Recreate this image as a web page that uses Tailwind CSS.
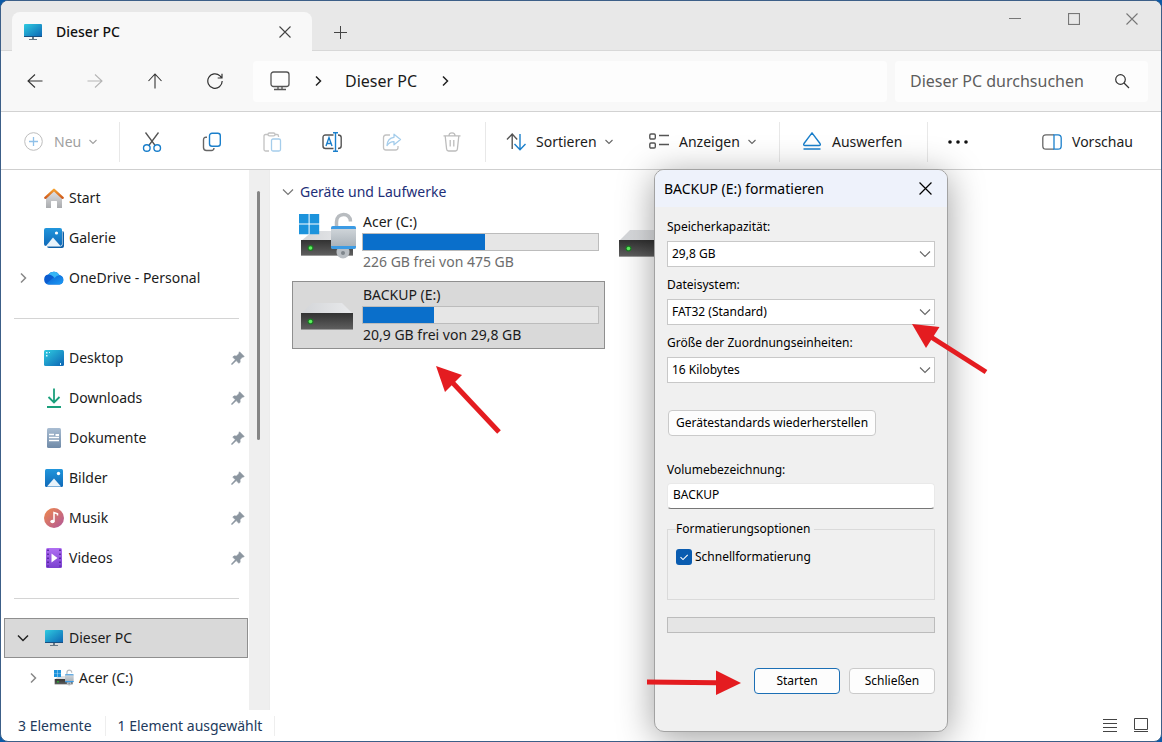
<!DOCTYPE html>
<html lang="de">
<head>
<meta charset="utf-8">
<meta name="viewport" content="width=device-width, initial-scale=1">
<title>Dieser PC</title>
<script src="https://cdn.jsdelivr.net/npm/@tailwindcss/browser@4"></script>
</head>
<body class="h-screen overflow-hidden bg-[#0a5aa8] font-['Noto_Sans','Open_Sans',sans-serif] text-sm text-[#1b1b1b]">
<svg class="absolute size-0" aria-hidden="true">
  <defs>
    <linearGradient id="gScreen" x1="0" y1="0" x2="1" y2="1"><stop offset="0" stop-color="#2fcbe0"/><stop offset="1" stop-color="#0c64b4"/></linearGradient>
    <linearGradient id="gPic" x1="0" y1="0" x2="0" y2="1"><stop offset="0" stop-color="#2196dc"/><stop offset="1" stop-color="#0f69b8"/></linearGradient>
    <linearGradient id="gRoof" x1="0" y1="0" x2="0" y2="1"><stop offset="0" stop-color="#f5a030"/><stop offset="1" stop-color="#cf5a1c"/></linearGradient>
    <linearGradient id="gWall" x1="0" y1="0" x2="0" y2="1"><stop offset="0" stop-color="#e2e2e4"/><stop offset="1" stop-color="#a9abae"/></linearGradient>
    <linearGradient id="gCloud" x1="0" y1="0" x2="1" y2="1"><stop offset="0" stop-color="#0a5cd0"/><stop offset="1" stop-color="#1c9cf5"/></linearGradient>
    <linearGradient id="gMusic" x1="0" y1="0" x2="1" y2="1"><stop offset="0" stop-color="#f08a4b"/><stop offset="1" stop-color="#b0569a"/></linearGradient>
    <linearGradient id="gVideo" x1="0" y1="0" x2="0" y2="1"><stop offset="0" stop-color="#b06ff2"/><stop offset="1" stop-color="#7a40d0"/></linearGradient>
    <linearGradient id="gDoc" x1="0" y1="0" x2="0" y2="1"><stop offset="0" stop-color="#a9bdd2"/><stop offset="1" stop-color="#6f8aa8"/></linearGradient>
    <linearGradient id="gTop" x1="0" y1="0" x2="1" y2="0"><stop offset="0" stop-color="#d3d5d8"/><stop offset="1" stop-color="#e9eaec"/></linearGradient>
    <linearGradient id="gFront" x1="0" y1="0" x2="0" y2="1"><stop offset="0" stop-color="#323232"/><stop offset="1" stop-color="#5e5e5e"/></linearGradient>
    <linearGradient id="gLock" x1="0" y1="0" x2="0" y2="1"><stop offset="0" stop-color="#d5dade"/><stop offset="1" stop-color="#a4adb5"/></linearGradient>
    <symbol id="pc" viewBox="0 0 20 18"><rect x="1" y="1" width="18" height="13" rx="1" fill="url(#gScreen)"/><path d="M1 13.500h18" stroke="#1a4f80" stroke-width="1"/><path d="M9 14h2v2h3v1H6v-1h3z" fill="#667785"/></symbol>
    <symbol id="pin" viewBox="0 0 14 14"><path d="M8.500.8 13.200 5.500l-1.400.7-.5-.1-2.300 2.600.1 2.400-1.200 1.200L5.200 9.600 1.400 13.200.6 13.400l.2-.8L4.400 8.800 1.800 6.100 3 4.900l2.400.1L8 2.700l-.1-.6z" fill="#8c96a0" stroke="#8c96a0" stroke-width=".7" stroke-linejoin="round"/></symbol>
    <symbol id="down" viewBox="0 0 12 12"><path d="m2.500 4 3.500 3.500L9.500 4" fill="none" stroke="currentColor" stroke-width="1.100"/></symbol>
    <symbol id="right" viewBox="0 0 12 12"><path d="m4 1.500 4.500 4.500L4 10.500" fill="none" stroke="currentColor" stroke-width="1.500"/></symbol>
    <symbol id="cross" viewBox="0 0 12 12"><path d="m.5.5 11 11m0-11-11 11" fill="none" stroke="currentColor" stroke-width="1.100"/></symbol>
    <symbol id="drive" viewBox="0 0 54 30"><path d="M12 2h30l11 11H1z" fill="url(#gTop)"/><rect x="1" y="12" width="52" height="16" fill="url(#gFront)"/><path d="M1 28.500h52" stroke="#999"/><circle cx="10.500" cy="20.500" r="3" fill="#1c7a24"/><circle cx="10.500" cy="20.500" r="1.800" fill="#5df25f"/></symbol>
    <symbol id="winlock" viewBox="0 0 58 50">
      <path d="M14 19h30l10 10H2z" fill="url(#gTop)"/><rect x="2" y="28" width="52" height="15" fill="url(#gFront)"/><path d="M2 43.500h52" stroke="#999"/><circle cx="11.500" cy="36" r="3" fill="#1c7a24"/><circle cx="11.500" cy="36" r="1.800" fill="#5df25f"/>
      <path d="M0 2h9.600v9.600H0zM10.600 2h9.600v9.600h-9.600zM0 12.600h9.600v9.600H0zM10.600 12.600h9.600v9.600h-9.600z" fill="#1c93dc"/>
      <path d="M37.500 15V10c0-10 14-10 14-.5" fill="none" stroke="#b8bcc0" stroke-width="3.500"/>
      <circle cx="44" cy="40" r="6.500" fill="#b9bec3"/><circle cx="44" cy="41" r="2" fill="#7f868c"/>
      <rect x="32" y="14" width="25" height="23" rx="2" fill="url(#gLock)"/><path d="M32 16q0-2 2-2h21q2 0 2 2v1H32zM32 34h25v1q0 2-2 2H34q-2 0-2-2z" fill="#3c9be4"/>
    </symbol>
  </defs>
</svg>

<div class="relative flex h-full flex-col overflow-hidden rounded-lg border border-[#3c5f88] bg-white">
  <!-- Tab strip -->
  <header class="flex h-[50px] shrink-0 items-end bg-[#e8e8e8] shadow-[inset_0_-1px_0_#d8d8d8]">
    <div class="ml-[11px] flex h-[39px] w-[300px] items-center rounded-t-lg bg-[#f8f8f8] pl-[11px] pr-[21px]">
      <svg class="h-[18px] w-5"><use href="#pc"/></svg>
      <span class="ml-[13px] flex-1 font-medium text-[#111]">Dieser PC</span>
      <button aria-label="Tab schließen" class="text-[#444]"><svg class="size-3"><use href="#cross"/></svg></button>
    </div>
    <button aria-label="Neuer Tab" class="ml-[22px] mb-[12px] text-[#444]"><svg class="size-[13px]" viewBox="0 0 13 13"><path d="M6.500 0v13M0 6.500h13" stroke="currentColor"/></svg></button>
    <div class="ml-auto flex h-full w-[152px] items-start justify-between pr-[23px] pt-[12px] text-[#777]">
      <button aria-label="Minimieren"><svg class="size-3" viewBox="0 0 12 12"><path d="M0 5.500h12" stroke="currentColor"/></svg></button>
      <button aria-label="Maximieren"><svg class="size-3" viewBox="0 0 12 12"><rect x=".5" y=".5" width="11" height="11" fill="none" stroke="currentColor" stroke-width="1.200"/></svg></button>
      <button aria-label="Schließen"><svg class="size-3"><use href="#cross"/></svg></button>
    </div>
  </header>

  <!-- Navigation -->
  <nav class="flex h-[61px] shrink-0 items-center border-b border-[#d2d2d2] bg-[#f8f8f8] pl-1 pr-[13px]">
    <button aria-label="Zurück" class="flex w-[60px] justify-center"><svg class="size-4" viewBox="0 0 16 16" fill="none" stroke="#333" stroke-width="1.100"><path d="M15.500 8H1M8 1.500 1 8l7 6.500"/></svg></button>
    <button aria-label="Vorwärts" class="flex w-[60px] justify-center"><svg class="size-4" viewBox="0 0 16 16" fill="none" stroke="#b5b5b5" stroke-width="1.100"><path d="M.5 8H15M8 1.500 15 8l-7 6.500"/></svg></button>
    <button aria-label="Nach oben" class="flex w-[60px] justify-center"><svg class="size-4" viewBox="0 0 16 16" fill="none" stroke="#333" stroke-width="1.100"><path d="M8 15.500V1M1.500 8 8 1l6.500 7"/></svg></button>
    <button aria-label="Aktualisieren" class="flex w-[60px] justify-center"><svg class="size-4" viewBox="0 0 16 16" fill="none" stroke="#333" stroke-width="1.200"><path d="M15.200 8A7.200 7.200 0 1 1 13 2.900L15 5M15 .8V5h-4.300"/></svg></button>
    <div class="ml-2 flex h-[41px] flex-1 items-center rounded bg-[#fdfdfd] pl-[17px] text-base">
      <svg class="size-5" viewBox="0 0 20 20" fill="none" stroke="#555" stroke-width="1.300"><rect x="1" y="1" width="18" height="14.500" rx="2.500"/><path d="M8 15.500v3M12 15.500v3M4 18.500h12"/></svg>
      <svg class="ml-[22px] size-3 text-[#222]"><use href="#right"/></svg>
      <a href="#" class="ml-[21px]">Dieser PC</a>
      <svg class="ml-[22px] size-3 text-[#222]"><use href="#right"/></svg>
    </div>
    <label class="ml-2 flex h-[41px] w-[253px] items-center rounded bg-[#fdfdfd] pl-[15px] pr-[18px]">
      <input type="text" aria-label="Suchen" placeholder="Dieser PC durchsuchen" class="min-w-0 flex-1 bg-transparent text-base outline-none placeholder:text-[#5d5d5d]">
      <svg class="size-4" viewBox="0 0 16 16" fill="none" stroke="#333" stroke-width="1.200"><circle cx="6.500" cy="6.500" r="4.800"/><path d="m10 10 5 5"/></svg>
    </label>
  </nav>

  <!-- Command bar -->
  <div class="flex h-[58px] shrink-0 items-center border-b border-[#cfcfcf] bg-white pl-px pt-0.5">
    <button disabled class="flex h-10 w-[118px] items-center border-r border-[#e8e8e8] pl-[22px] text-[#a0a0a0]">
      <svg class="size-[19px]" viewBox="0 0 19 19" fill="none"><circle cx="9.500" cy="9.500" r="8.800" stroke="#bdbdbd"/><path d="M9.500 5v9M5 9.500h9" stroke="#8fc0e8" stroke-width="1.300"/></svg>
      <span class="ml-[11px]">Neu</span><svg class="ml-1.5 size-3"><use href="#down"/></svg>
    </button>
    <div class="flex h-10 w-[366px] border-r border-[#e8e8e8] pl-[2px]">
      <button aria-label="Ausschneiden" class="flex w-[60px] items-center justify-center"><svg class="size-5" viewBox="0 0 20 20" fill="none"><path d="M3.500.5 12.800 13M16.500.5 7.200 13" stroke="#555" stroke-width="1.300"/><circle cx="4.800" cy="16" r="3.300" stroke="#1a7fcb" stroke-width="1.400"/><circle cx="15.200" cy="16" r="3.300" stroke="#1a7fcb" stroke-width="1.400"/></svg></button>
      <button aria-label="Kopieren" class="flex w-[60px] items-center justify-center"><svg class="size-5" viewBox="0 0 20 20" fill="none" stroke-width="1.400"><path d="M5 5.200H4Q1.500 5.200 1.500 8v7.500q0 3 3 3h5q2.300 0 2.500-2.500" stroke="#666"/><rect x="7.500" y="1.200" width="10.800" height="13" rx="2.500" stroke="#1a7fcb"/></svg></button>
      <button aria-label="Einfügen" disabled class="flex w-[60px] items-center justify-center"><svg class="size-5" viewBox="0 0 20 20" fill="none" stroke-width="1.300"><path d="M6 2.500H3.500q-1.500 0-1.500 1.500v13.500Q2 19 3.500 19H7M13 2.500h2q1.500 0 1.500 1.500v1" stroke="#c2c2c2"/><rect x="6" y="1" width="7" height="2.800" rx="1.400" stroke="#c2c2c2"/><rect x="9.500" y="7" width="9" height="12" rx="1.500" stroke="#a5cdeb"/></svg></button>
      <button aria-label="Umbenennen" class="flex w-[60px] items-center justify-center"><svg class="size-5" viewBox="0 0 20 20" fill="none" stroke-width="1.400"><path d="M11.500 3H3.500Q1 3 1 5.500v8.500q0 2.500 2.500 2.500h8M16 3q3.200 0 3.200 2.500v8.500q0 2.500-3.200 2.500" stroke="#555"/><path d="m4 14 3-8.500 3 8.500M5 11.500h4M11 .8h5M13.500.8v18.400M11 19.200h5" stroke="#1a7fcb"/></svg></button>
      <button aria-label="Freigeben" disabled class="flex w-[60px] items-center justify-center"><svg class="size-5" viewBox="0 0 20 20" fill="none" stroke-width="1.300" stroke-linejoin="round"><path d="M8 3H4Q1.500 3 1.500 5.500v10Q1.500 18 4 18h9.500q2.500 0 2.500-2.500V14" stroke="#c2c2c2"/><path d="M12 2.200 18.500 7.500 12 12.800V9.700Q8 9.500 5 13.500q.5-7.500 7-8.200z" stroke="#a5cdeb"/></svg></button>
      <button aria-label="Löschen" disabled class="flex w-[60px] items-center justify-center"><svg class="size-5" viewBox="0 0 20 20" fill="none" stroke="#bcbcbc" stroke-width="1.300"><path d="M1.500 3.800h17M7 3.800q0-3 3-3t3 3M3.200 4 4.600 17q.2 2 2 2h6.800q1.800 0 2-2L16.800 4M8.200 8v6.500M11.800 8v6.500"/></svg></button>
    </div>
    <div class="flex h-10 w-[294px] items-center border-r border-[#e8e8e8] pl-5">
      <button class="flex w-[143px] items-center">
        <svg class="size-5" viewBox="0 0 20 20" fill="none" stroke-width="1.400"><path d="M6.200 17V2.500M1 7.500l5.200-5.500 5 5.500" stroke="#555"/><path d="M14 2v15.500M8.500 12l5.500 5.800L19.500 12" stroke="#1a7fcb"/></svg>
        <span class="ml-[10px]">Sortieren</span><svg class="ml-1.5 size-3 text-[#666]"><use href="#down"/></svg>
      </button>
      <button class="flex items-center">
        <svg class="size-5" viewBox="0 0 20 20" fill="none" stroke="#555" stroke-width="1.400"><rect x=".8" y="2" width="5.500" height="5" rx="1.200"/><rect x=".8" y="11" width="5.500" height="5" rx="1.200"/><path d="M10 3.500h10M10 12.500h10"/></svg>
        <span class="ml-[10px]">Anzeigen</span><svg class="ml-1.5 size-3 text-[#666]"><use href="#down"/></svg>
      </button>
    </div>
    <div class="flex h-10 w-[148px] items-center border-r border-[#e8e8e8] pl-[22px]">
      <button class="flex items-center">
        <svg class="size-5" viewBox="0 0 20 20" fill="none" stroke="#1a7fcb" stroke-width="1.400" stroke-linejoin="round"><path d="M10 .8 18 11.500q1 2-1 2H3q-2 0-1-2zM1.500 17h17"/></svg>
        <span class="ml-[10px]">Auswerfen</span>
      </button>
    </div>
    <button aria-label="Mehr" class="ml-5 flex"><svg class="h-1 w-5" viewBox="0 0 20 4" fill="#111"><circle cx="2" cy="2" r="1.800"/><circle cx="10" cy="2" r="1.800"/><circle cx="18" cy="2" r="1.800"/></svg></button>
    <button class="ml-auto mr-[28px] flex items-center">
      <svg class="h-4 w-5" viewBox="0 0 20 16" fill="none" stroke-width="1.300"><path d="M12 .8H4Q.8.800.8 4v8q0 3.200 3.200 3.200h8" stroke="#666"/><path d="M12 .8h4q3.200 0 3.200 3.200v8q0 3.200-3.200 3.200h-4zM12 .8v14.400" stroke="#1a7fcb"/></svg>
      <span class="ml-[10px]">Vorschau</span>
    </button>
  </div>

  <main class="flex min-h-0 flex-1">
    <!-- Folder tree -->
    <aside class="flex w-[269px] shrink-0 justify-between overflow-hidden border-r border-[#ececec]">
      <div class="w-[247px] pt-2 [&_a]:flex [&_a]:h-10 [&_a]:items-center [&_a]:pl-[43px]">
        <a href="#"><svg class="size-5" viewBox="0 0 20 20"><path d="M2 9.500 10 2.500l8 7V20h-5v-6.500q0-.5-.5-.5h-5q-.5 0-.5.500V20H2z" fill="url(#gWall)"/><path d="m1.300 9.800 8.700-8 8.700 8" fill="none" stroke="url(#gRoof)" stroke-width="2.400" stroke-linecap="round" stroke-linejoin="round"/></svg><span class="ml-[5px]">Start</span></a>
        <a href="#"><svg class="size-5" viewBox="0 0 20 20"><rect x="3" y="3" width="17" height="17" rx="2" fill="#0d5ea6"/><rect x="0" y="0" width="18.500" height="18.500" rx="2" fill="#fff"/><rect width="18" height="18" rx="2" fill="url(#gPic)"/><path d="M2 18 9 9.500l7.500 8.500z" fill="#e8f3fb"/><circle cx="12.500" cy="5" r="1.600" fill="#fff"/></svg><span class="ml-[5px]">Galerie</span></a>
        <a href="#" class="relative"><svg class="absolute left-4 size-3 text-[#888]"><use href="#right"/></svg><svg class="size-5" viewBox="0 0 20 20"><path d="M5 16.500a5 5 0 0 1-.8-9.900A6.500 6.500 0 0 1 15.500 7.300 4.700 4.700 0 0 1 15.500 16.500z" fill="#0a5cd0"/><path d="M5 16.500a4.500 4.500 0 0 1-2.500-1L9 10l3-3q2-1 3.800.3A4.700 4.700 0 0 1 15.500 16.500z" fill="url(#gCloud)"/><path d="M4.200 6.600A6.500 6.500 0 0 1 15.500 7.300q-3 .2-5 2.800Q8 6.500 4.200 6.600z" fill="#35b5f5"/></svg><span class="ml-[5px]">OneDrive - Personal</span></a>
        <div class="flex h-10 items-center pl-[13px] pr-[9px]"><div class="h-px w-full bg-[#d4d4d4]"></div></div>
        <a href="#"><svg class="size-5" viewBox="0 0 20 20"><rect y="2" width="20" height="16" rx="1.500" fill="url(#gScreen)"/><path d="M2 4h1.500v1.500H2zM2 7h1.500v1.500H2zM5 4h1v1H5zM16 15h1v2h-1z" fill="#d8f6ff"/></svg><span class="ml-[5px] flex-1">Desktop</span><svg class="mr-[3px] size-[14px]"><use href="#pin"/></svg></a>
        <a href="#"><svg class="size-5" viewBox="0 0 20 20" fill="none" stroke="#1ba07c" stroke-width="1.800"><path d="M10 .5V14M4.500 9l5.500 5.500L15.500 9M3 19h14"/></svg><span class="ml-[5px] flex-1">Downloads</span><svg class="mr-[3px] size-[14px]"><use href="#pin"/></svg></a>
        <a href="#"><svg class="size-5" viewBox="0 0 20 20"><rect x="3" width="14" height="20" rx="1.500" fill="url(#gDoc)"/><path d="M5 6.500h5M5 9.500h10M5 12.500h10" stroke="#fff" stroke-width="1.300"/><path d="M11.500 6H15v2h-3.500z" fill="#fff"/></svg><span class="ml-[5px] flex-1">Dokumente</span><svg class="mr-[3px] size-[14px]"><use href="#pin"/></svg></a>
        <a href="#"><svg class="size-5" viewBox="0 0 20 20"><rect x="1" y="1" width="18" height="18" rx="1.500" fill="url(#gPic)"/><path d="m3 18.500 7-8 7 8z" fill="#e8f3fb"/><circle cx="14.500" cy="5.500" r="1.700" fill="#fff"/></svg><span class="ml-[5px] flex-1">Bilder</span><svg class="mr-[3px] size-[14px]"><use href="#pin"/></svg></a>
        <a href="#"><svg class="size-5" viewBox="0 0 20 20"><circle cx="10" cy="10" r="10" fill="url(#gMusic)"/><ellipse cx="8.500" cy="13.500" rx="2.200" ry="1.800" fill="#fff"/><path d="M10 13.500V4.500l3.500 1.200v1.800" fill="none" stroke="#fff" stroke-width="1.500"/></svg><span class="ml-[5px] flex-1">Musik</span><svg class="mr-[3px] size-[14px]"><use href="#pin"/></svg></a>
        <a href="#"><svg class="size-5" viewBox="0 0 20 20"><rect x="2" width="16" height="20" rx="1.500" fill="url(#gVideo)"/><path d="M4 1.500v17M16 1.500v17" stroke="#4a1d92" stroke-width="1.500" stroke-dasharray="1.500 2.500"/><path d="m7.500 5.500 6 4.500-6 4.500z" fill="#fff"/></svg><span class="ml-[5px] flex-1">Videos</span><svg class="mr-[3px] size-[14px]"><use href="#pin"/></svg></a>
        <div class="flex h-10 items-center pl-[13px] pr-[9px]"><div class="h-px w-full bg-[#d4d4d4]"></div></div>
        <a href="#" aria-current="page" class="relative ml-[3px] border border-[#8f8f8f] bg-[#d9d9d9] pl-[39px]!"><svg class="absolute left-3 size-3 text-[#222]" viewBox="0 0 12 12"><path d="m1 3.500 5 5 5-5" fill="none" stroke="currentColor" stroke-width="1.500"/></svg><svg class="h-[18px] w-5"><use href="#pc"/></svg><span class="ml-[5px]">Dieser PC</span></a>
        <a href="#" class="relative pl-[53px]!"><svg class="absolute left-[26px] size-3 text-[#888]"><use href="#right"/></svg><svg class="h-[18px] w-5"><use href="#winlock"/></svg><span class="ml-[5px]">Acer (C:)</span></a>
      </div>
      <div class="flex w-5 bg-[#efefef] pl-2 pt-[21px]"><div class="h-[249px] w-[3px] rounded-full bg-[#858585]"></div></div>
    </aside>

    <!-- Drives -->
    <section class="min-w-0 flex-1 pl-[22px] pt-[11px]">
      <h2 class="flex h-[22px] items-center text-[#1e2f78]"><svg class="-ml-[10px] size-3 text-[#777]" viewBox="0 0 12 12"><path d="m1 3.500 5 5 5-5" fill="none" stroke="currentColor" stroke-width="1.200"/></svg><span class="ml-1.5">Geräte und Laufwerke</span></h2>
      <div class="mt-[5px] grid grid-cols-[313px_313px] gap-[5px]">
        <a href="#" class="flex h-[68px] border border-transparent pl-[6px] pr-[5px]">
          <svg class="mt-[3px] h-[50px] w-[58px] shrink-0"><use href="#winlock"/></svg>
          <div class="ml-[5px] flex-1 leading-5"><div class="mt-[3px] pl-px">Acer (C:)</div><div class="mt-px h-[18px] border border-[#bcbcbc] bg-[#e6e6e6]"><div class="h-full bg-[#0a6fcb]" style="width:52%"></div></div><div class="mt-px pl-px text-[#6d6d6d]">226 GB frei von 475 GB</div></div>
        </a>
        <a href="#" class="flex h-[68px] border border-transparent pl-[7px] pr-[5px]"><svg class="mt-[19px] h-[30px] w-[54px]" role="img" aria-label="Laufwerk"><use href="#drive"/></svg></a>
        <a href="#" class="flex h-[68px] border border-[#8f8f8f] bg-[#d9d9d9] pl-[7px] pr-[5px]">
          <svg class="mt-[19px] h-[30px] w-[54px] shrink-0"><use href="#drive"/></svg>
          <div class="ml-2 flex-1 leading-5"><div class="mt-[3px] pl-px">BACKUP (E:)</div><div class="mt-px h-[18px] border border-[#bcbcbc] bg-[#e6e6e6]"><div class="h-full bg-[#0a6fcb]" style="width:30%"></div></div><div class="mt-px pl-px">20,9 GB frei von 29,8 GB</div></div>
        </a>
      </div>
    </section>
  </main>

  <footer class="flex h-[31px] shrink-0 items-center pl-[17px] pr-3 text-[#223a5c]">
    <span class="border-r border-[#eee] pr-[13px]">3 Elemente</span><span class="border-r border-[#eee] px-3">1 Element ausgewählt</span>
    <div class="ml-auto flex gap-4">
      <button aria-label="Details"><svg class="size-[15px]" viewBox="0 0 15 15" stroke="#444"><path d="M0 1.500h14M0 5.500h14M0 9.500h14M0 13.500h14"/></svg></button>
      <button aria-label="Große Symbole"><svg class="size-[15px]" viewBox="0 0 15 15" fill="none" stroke="#444"><path d="M.5.5h13v11H.5zM0 13.500h14"/></svg></button>
    </div>
  </footer>
</div>

<!-- Format dialog -->
<div role="dialog" aria-labelledby="dlg" class="absolute left-[654px] top-[169px] w-[294px] overflow-hidden rounded-[10px] border border-[#a2a2a2] bg-[#f0f0f0] text-black shadow-[0_6px_36px_rgba(0,0,0,0.38)]">
  <div class="flex h-[37px] items-center bg-[#eef2fb] pl-[9px] pr-[15px]"><h1 id="dlg" class="flex-1">BACKUP (E:) formatieren</h1><button aria-label="Dialog schließen"><svg class="size-[13px]" viewBox="0 0 12 12"><use href="#cross"/></svg></button></div>
  <form class="px-3 pb-[37px] pt-[11px] font-['Noto_Sans',sans-serif] text-xs leading-[18px]">
    <label for="cap" class="block">Speicherkapazität:</label>
    <div class="relative mt-[5px]"><select id="cap" class="h-[26px] w-full appearance-none border border-[#c8c8c8] bg-white pl-1"><option>29,8 GB</option></select><svg class="pointer-events-none absolute right-1 top-[7px] size-3 text-[#666]" viewBox="0 0 12 12"><path d="m1 3.500 5 5 5-5" fill="none" stroke="currentColor" stroke-width="1.100"/></svg></div>
    <label for="fs" class="mt-[9px] block">Dateisystem:</label>
    <div class="relative mt-[5px]"><select id="fs" class="h-[26px] w-full appearance-none border border-[#c8c8c8] bg-white pl-1"><option>FAT32 (Standard)</option></select><svg class="pointer-events-none absolute right-1 top-[7px] size-3 text-[#666]" viewBox="0 0 12 12"><path d="m1 3.500 5 5 5-5" fill="none" stroke="currentColor" stroke-width="1.100"/></svg></div>
    <label for="au" class="mt-[9px] block">Größe der Zuordnungseinheiten:</label>
    <div class="relative mt-[5px]"><select id="au" class="h-[26px] w-full appearance-none border border-[#c8c8c8] bg-white pl-1"><option>16 Kilobytes</option></select><svg class="pointer-events-none absolute right-1 top-[7px] size-3 text-[#666]" viewBox="0 0 12 12"><path d="m1 3.500 5 5 5-5" fill="none" stroke="currentColor" stroke-width="1.100"/></svg></div>
    <button type="button" class="ml-px mt-[27px] block h-[26px] w-[208px] whitespace-nowrap rounded border border-[#cacaca] bg-[#fdfdfd]">Gerätestandards wiederherstellen</button>
    <label for="vol" class="mt-[25px] block">Volumebezeichnung:</label>
    <input id="vol" type="text" value="BACKUP" class="mt-1 block h-[26px] w-full rounded-sm border border-[#e9e9e9] border-b-[#777] bg-white pb-1 pl-[5px] outline-none">
    <fieldset class="mt-[11px] h-[80px] border border-[#dadada] px-2"><legend class="pr-1">Formatierungsoptionen</legend>
      <label class="mt-[10px] flex items-center"><span class="relative mr-[3px] size-4"><input type="checkbox" checked class="block size-4 appearance-none rounded-[3px] bg-[#0a5cb0]"><svg class="pointer-events-none absolute left-0 top-0 size-4" viewBox="0 0 16 16"><path d="m4.500 8.200 2.500 2.400 4.700-4.800" fill="none" stroke="#fff" stroke-width="1.100"/></svg></span>Schnellformatierung</label>
    </fieldset>
    <div role="progressbar" aria-label="Fortschritt" class="mt-[17px] h-[16px] border border-[#bcbcbc] bg-[#e5e5e5]"></div>
    <div class="mt-[35px] flex justify-end gap-[9px]"><button type="button" class="h-[26px] w-[86px] rounded border border-[#1c6fb5] bg-[#fdfdfd]">Starten</button><button type="button" class="h-[26px] w-[86px] rounded border border-[#cacaca] bg-[#fdfdfd]">Schließen</button></div>
  </form>
</div>

<!-- Annotation arrows -->
<svg class="pointer-events-none absolute left-0 top-0" width="1162" height="742" fill="#e41c20" stroke="#e41c20" aria-hidden="true">
  <path d="M436 366 462 375 445 392z" stroke="none"/><path d="m452 382 47 50" stroke-width="5"/>
  <path d="M912 324 939.500 327 926 348z" stroke="none"/><path d="m931 337 55 35" stroke-width="5"/>
  <path d="M741 683 716 670.500V695z" stroke="none"/><path d="M647 682l70 .8" stroke-width="5"/>
</svg>
</body>
</html>
